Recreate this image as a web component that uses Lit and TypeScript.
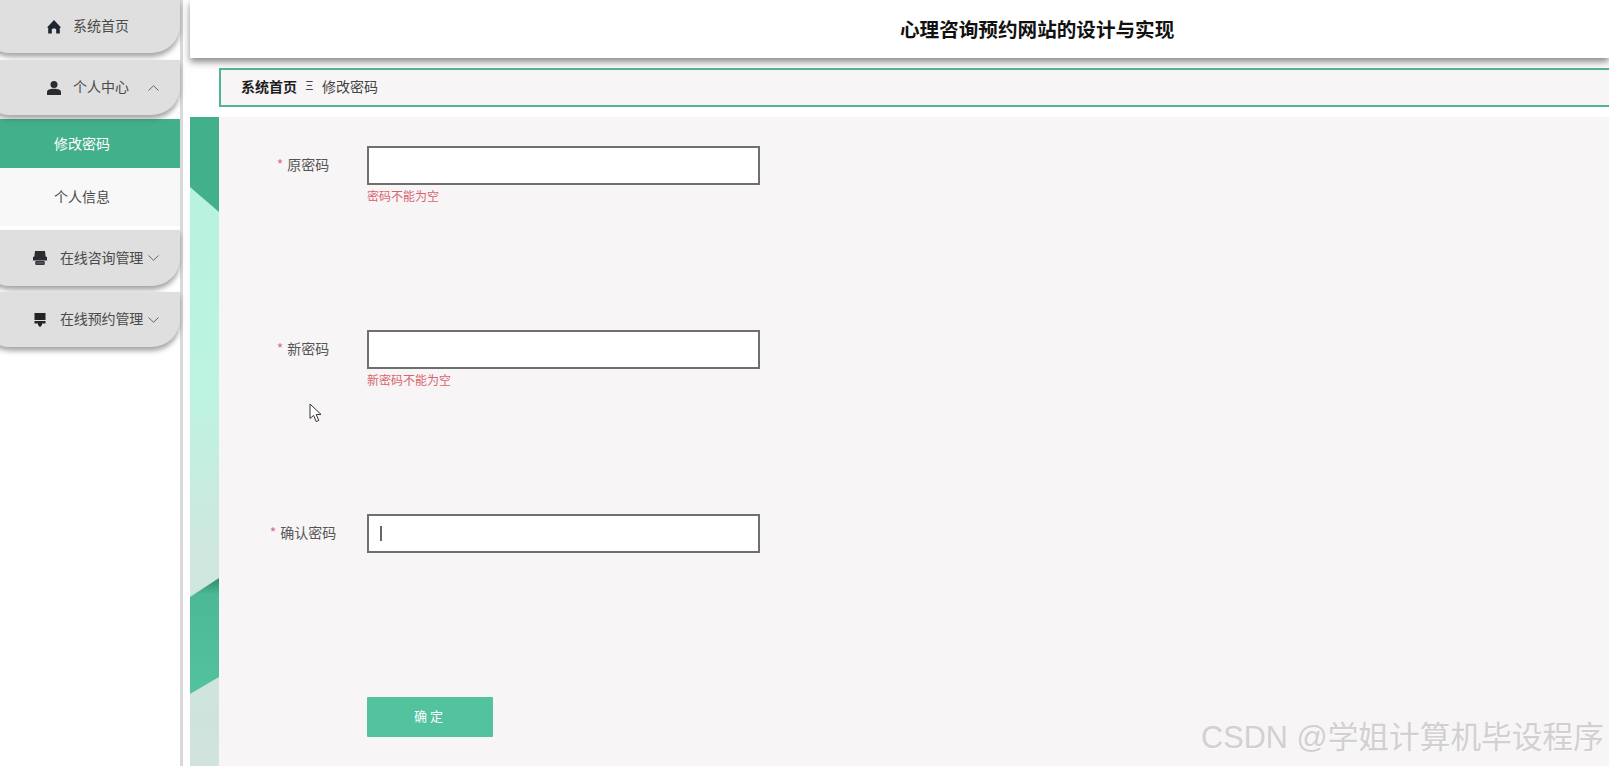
import { LitElement, html, css, svg } from "lit";
import { customElement } from "lit/decorators.js";

const chevron = (up: boolean) => html`<svg class="chev" viewBox="0 0 11 6" width="11" height="6">
  <path d=${up ? "M0.5 5.5 L5.5 0.8 L10.5 5.5" : "M0.5 0.5 L5.5 5.2 L10.5 0.5"} fill="none" stroke="#666" stroke-width="1"/></svg>`;

const icons = {
  home: svg`<path d="M7 0 L14 7.4 L12.8 7.8 V13.5 H9.2 V9.6 C9.2 8 4.8 8 4.8 9.6 V13.5 H1.2 V7.8 L0 7.4 Z" fill="#1f2530"/>`,
  user: svg`<circle cx="7" cy="3.6" r="3.5" fill="#2a2a30"/><path d="M0 14 V11.2 C0 8.8 3 7.8 7 7.8 C11 7.8 14 8.8 14 11.2 V14 Z" fill="#2a2a30"/>`,
  desk: svg`<path d="M2 0 H12 L12.6 5.5 L14 6 V9.5 H0 V6 L1.4 5.5 Z" fill="#2b2b30"/><path d="M2.8 10.6 H11.2 V13.4 H2.8 Z" fill="#55555a" stroke="#2b2b30" stroke-width="1"/>`,
  brush: svg`<path d="M1.5 0 H12.5 V7 H1.5 Z" fill="#232328"/><path d="M1.5 8 H12.5 V10.4 H9 V12 L7 14.2 L5 12 V10.4 H1.5 Z" fill="#232328"/>`,
};
const icon = (name: keyof typeof icons) =>
  html`<svg class="ico" viewBox="0 0 14 14" width="14" height="14">${icons[name]}</svg>`;

@customElement("app-root")
export class AppRoot extends LitElement {
  static styles = css`
    :host {
      display: block;
      width: 1609px;
      height: 766px;
      overflow: hidden;
      position: relative;
      background: #fff;
      font-family: "Noto Sans CJK SC", "Liberation Sans", sans-serif;
      font-size: 14px;
      color: #555;
    }
    .page { display: flex; height: 766px; }
    .side {
      flex: none;
      width: 180px;
      border-right: 3px solid #d9d9d9;
      margin-right: 7px;
      background: #fff;
    }
    .item {
      display: flex;
      align-items: center;
      box-sizing: border-box;
      width: 198px;
      margin-left: -18px;
      padding-right: 21px;
      background: #dfdfdf;
      border-radius: 0 0 28px 28px;
      box-shadow: 0 4px 5px rgba(60, 60, 60, 0.45);
      color: #4a4a4a;
      position: relative;
    }
    .item span { padding-bottom: 3px; }
    .i1 { height: 53px; margin-bottom: 7px; padding-left: 65px; }
    .i2 { height: 55px; margin-bottom: 4px; padding-left: 65px; }
    .i3 { height: 56px; margin-bottom: 6px; padding-left: 51px; }
    .i4 { height: 55px; padding-left: 51px; }
    .i1 .ico, .i2 .ico { margin-right: 12px; }
    .i3 .ico, .i4 .ico { margin-right: 13px; }
    .i3 span, .i4 span { letter-spacing: -0.15px; }
    .chev { margin-left: auto; }
    .ico { flex: none; }
    .sub {
      display: flex;
      align-items: center;
      box-sizing: border-box;
      padding: 0 0 2px 54px;
      color: #4a4a4a;
    }
    .sub.on { height: 49px; background: #43b08c; color: #fff; }
    .sub.off { height: 58px; margin-bottom: 4px; background: #f8f8f8; padding-bottom: 3px; }

    .main { flex: 1; min-width: 0; display: flex; flex-direction: column; }
    .top {
      flex: none;
      box-sizing: border-box;
      height: 58px;
      display: flex;
      align-items: center;
      padding: 0 0 2px 710px;
      background: #fff;
      box-shadow: 0 4px 7px rgba(60, 60, 60, 0.6);
      color: #111;
      font-size: 19.6px;
      font-weight: 700;
      position: relative;
    }
    .crumbs {
      flex: none;
      box-sizing: border-box;
      height: 39px;
      margin: 10px -4px 10px 29px;
      display: flex;
      align-items: center;
      padding: 0 0 3px 20px;
      background: #f7f5f6;
      border: 2px solid #4fb595;
      color: #444;
    }
    .crumbs b { color: #1c1c1c; font-weight: 700; }
    .sep {
      width: 25px;
      text-align: center;
      font-family: "Liberation Sans", sans-serif;
      font-size: 12px;
      color: #444;
    }
    .body { flex: 1; display: flex; min-height: 0; }
    .strip { flex: none; width: 29px; display: block; }
    .content { flex: 1; background: #f7f5f6; padding: 29px 0 0 20px; }
    .row { display: flex; height: 184px; }
    .row.last { height: 183px; }
    .label {
      flex: none;
      width: 128px;
      height: 39px;
      line-height: 36px;
      text-align: center;
      color: #555;
    }
    .star { color: #d8708c; margin-right: 4px; }
    .field { position: relative; width: 393px; }
    input {
      display: block;
      box-sizing: border-box;
      width: 393px;
      height: 39px;
      border: 2px solid #6f6f6f;
      background: #fff;
      outline: none;
      padding: 0;
    }
    .err {
      margin-top: 3px;
      font-size: 12px;
      line-height: 16px;
      color: #d9636f;
    }
    .caret {
      position: absolute;
      left: 13px;
      top: 12px;
      width: 2px;
      height: 15px;
      background: #666;
    }
    .btn {
      margin-left: 128px;
      display: block;
      width: 126px;
      height: 40px;
      border: 0;
      border-radius: 1px;
      background: #53c29f;
      color: #fff;
      font: inherit;
      font-size: 13px;
      letter-spacing: 3px;
      padding: 0 0 3px;
    }
    .mouse { position: absolute; left: 309px; top: 403px; }
    .mark {
      position: absolute;
      left: 1201px;
      top: 719px;
      font-family: "Liberation Sans", "Noto Sans CJK SC", sans-serif;
      font-size: 30.7px;
      line-height: 38px;
      white-space: nowrap;
      color: #d2d0d1;
      text-shadow: 1px 1px 0 #fbfafa;
    }
  `;

  render() {
    return html`
      <div class="page">
        <nav class="side">
          <div class="item i1">${icon("home")}<span>系统首页</span></div>
          <div class="item i2">${icon("user")}<span>个人中心</span>${chevron(true)}</div>
          <div class="sub on">修改密码</div>
          <div class="sub off">个人信息</div>
          <div class="item i3">${icon("desk")}<span>在线咨询管理</span>${chevron(false)}</div>
          <div class="item i4">${icon("brush")}<span>在线预约管理</span>${chevron(false)}</div>
        </nav>
        <div class="main">
          <header class="top">心理咨询预约网站的设计与实现</header>
          <div class="crumbs"><b>系统首页</b><span class="sep">Ξ</span><span>修改密码</span></div>
          <div class="body">
            <svg class="strip" viewBox="0 0 29 649" width="29" height="649">
              <defs>
                <linearGradient id="mint" x1="0" y1="0" x2="0" y2="1">
                  <stop offset="0.08" stop-color="#b6f3df"/>
                  <stop offset="0.42" stop-color="#bcf3e1"/>
                  <stop offset="0.68" stop-color="#cfe6df"/>
                  <stop offset="1" stop-color="#d0e3dd"/>
                </linearGradient>
                <linearGradient id="band" x1="0" y1="0" x2="0" y2="1">
                  <stop offset="0" stop-color="#2f8a6e"/>
                  <stop offset="0.14" stop-color="#4cb896"/>
                  <stop offset="1" stop-color="#53c29f"/>
                </linearGradient>
              </defs>
              <rect width="29" height="649" fill="url(#mint)"/>
              <polygon points="0,0 29,0 29,95 0,70" fill="#43b08c"/>
              <polygon points="0,480 29,461 29,560 0,577" fill="url(#band)"/>
            </svg>
            <main class="content">
              <div class="row">
                <div class="label"><span class="star">*</span>原密码</div>
                <div class="field"><input type="password" /><div class="err">密码不能为空</div></div>
              </div>
              <div class="row">
                <div class="label"><span class="star">*</span>新密码</div>
                <div class="field"><input type="password" /><div class="err">新密码不能为空</div></div>
              </div>
              <div class="row last">
                <div class="label"><span class="star">*</span>确认密码</div>
                <div class="field"><input type="password" /><div class="caret"></div></div>
              </div>
              <button class="btn">确定</button>
            </main>
          </div>
        </div>
      </div>
      <svg class="mouse" viewBox="0 0 14 20" width="14" height="20">
        <path d="M1 1 L1 15.5 L4.6 12.4 L7.2 18.6 L9.8 17.4 L7.2 11.6 L12 11.4 Z" fill="#fff" stroke="#333" stroke-width="1"/>
      </svg>
      <div class="mark">CSDN @学姐计算机毕设程序</div>
    `;
  }
}
